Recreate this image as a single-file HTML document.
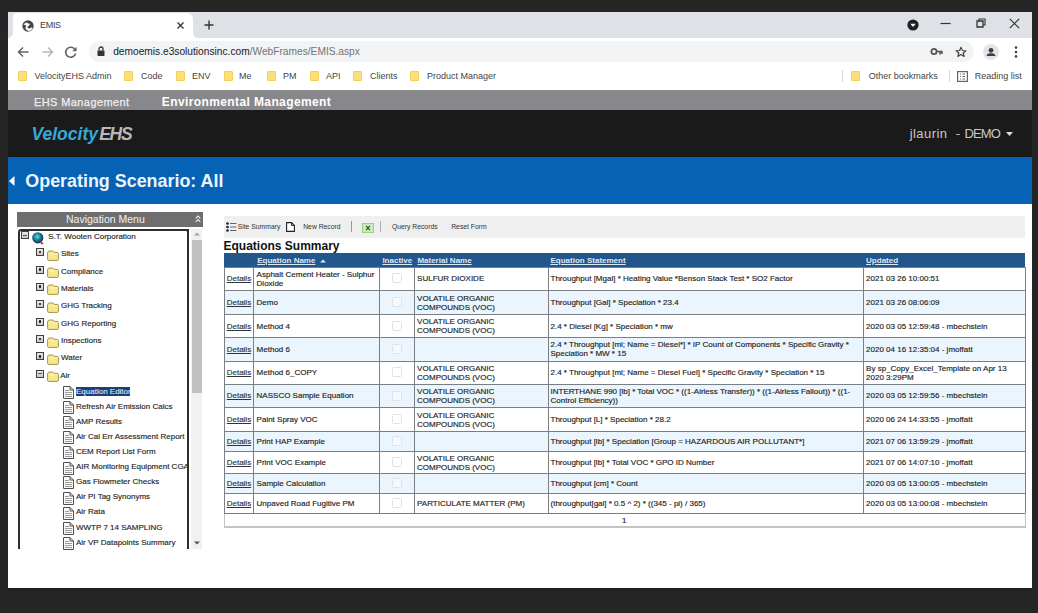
<!DOCTYPE html>
<html><head><meta charset="utf-8">
<style>
*{margin:0;padding:0;box-sizing:border-box}
html,body{width:1038px;height:613px;overflow:hidden;background:#262626;font-family:"Liberation Sans",sans-serif;position:relative}
.a{position:absolute}
.t{position:absolute;white-space:nowrap;line-height:1}
svg{position:absolute;overflow:visible}
#win{left:8px;top:12px;width:1024px;height:576px;background:#fff}
#tabs{left:8px;top:12px;width:1024px;height:26px;background:#dee1e6}
#tab{left:13px;top:12.5px;width:180px;height:25.5px;background:#fff;border-radius:4px 6px 0 0}
#omni{left:89px;top:41px;width:885px;height:21px;background:#f1f3f4;border-radius:11px}
.bmf{position:absolute;top:71px;width:9px;height:10px;background:#fbe07a;border:1px solid #f2cf55;border-radius:1px}
.bmt{top:72px;font-size:9px;color:#444}
#gbar{left:8px;top:90px;width:1024px;height:20px;background:#88878b}
#hdr{left:8px;top:110px;width:1024px;height:47px;background:#1b1a1a}
#blue{left:8px;top:157px;width:1024px;height:47px;background:#0662b5}

.nt{position:absolute;white-space:nowrap;line-height:1;font-size:8px;color:#262626;-webkit-text-stroke:0.15px currentColor}
.cell{position:absolute;white-space:nowrap;line-height:9px;font-size:8px;color:#1c1c1c;-webkit-text-stroke:0.15px currentColor}
.hd{position:absolute;white-space:nowrap;line-height:1;font-size:8px;font-weight:bold;color:#dce9f7;text-decoration:underline}
</style></head><body><div class="a" id="shadowline" style="left:8px;top:588px;width:1024px;height:2px;background:#1e1e1e"></div>

<div id="win" class="a"></div>
<!-- ===== browser chrome ===== -->
<div id="tabs" class="a"></div>
<div id="tab" class="a"></div>
<svg style="left:193px;top:32px" width="6" height="6"><path d="M0 0 Q0 6 6 6 L0 6Z" fill="#fff"/></svg>
<svg style="left:7px;top:32px" width="6" height="6"><path d="M6 0 Q6 6 0 6 L6 6Z" fill="#fff"/></svg>
<svg style="left:21.8px;top:19.6px" width="12" height="12" viewBox="0 0 16 16"><circle cx="8" cy="8" r="7.6" fill="#474747"/><path d="M5.5 3.2 C7 4.6 9 4 10 5.2 C11 6.6 8.6 7.6 7.6 8.6 C6.6 10 8.4 11.6 10.2 11.2 C12 10.8 12.6 9.8 14.2 10.2 C13.2 13 10.8 14.8 8.4 15 C7.6 13.6 5.8 13 4.8 12 C4.2 10.2 5.8 9.2 5.4 7.8 C5 6.6 3.2 6.6 2.2 6.4 C2.8 5 4 3.8 5.5 3.2Z" fill="#fff"/></svg>
<div class="t" style="left:40px;top:21px;font-size:9px;letter-spacing:-0.3px;color:#3c4043">EMIS</div>
<svg style="left:177px;top:21.5px" width="7" height="7"><path d="M0.5 0.5 L6.5 6.5 M6.5 0.5 L0.5 6.5" stroke="#333" stroke-width="1.3"/></svg>
<svg style="left:204px;top:20px" width="10" height="10"><path d="M5 0.5 V9.5 M0.5 5 H9.5" stroke="#333" stroke-width="1.4"/></svg>
<!-- window controls -->
<svg style="left:906.5px;top:19px" width="12" height="12"><circle cx="6" cy="6" r="5.6" fill="#202124"/><path d="M3.3 4.8 L8.7 4.8 L6 8Z" fill="#fff"/></svg>
<svg style="left:940px;top:22px" width="11" height="3"><path d="M0.5 1.5 H10.5" stroke="#333" stroke-width="1.2"/></svg>
<svg style="left:975.5px;top:18px" width="10" height="10"><path d="M1 3 H7 V9 H1Z" fill="none" stroke="#333" stroke-width="1.3"/><path d="M3 3 V1 H9 V7 H7" fill="none" stroke="#333" stroke-width="1.1"/></svg>
<svg style="left:1009px;top:17.5px" width="11" height="11"><path d="M0.8 0.8 L10.2 10.2 M10.2 0.8 L0.8 10.2" stroke="#333" stroke-width="1.2"/></svg>
<!-- toolbar -->
<svg style="left:17px;top:46px" width="12" height="12"><path d="M11.5 6 H1.5 M6 1.5 L1.5 6 L6 10.5" fill="none" stroke="#5f6368" stroke-width="1.5"/></svg>
<svg style="left:42px;top:46px" width="12" height="12"><path d="M0.5 6 H10.5 M6 1.5 L10.5 6 L6 10.5" fill="none" stroke="#b5b8bb" stroke-width="1.5"/></svg>
<svg style="left:65px;top:46px" width="12" height="12"><path d="M10 3.6 A5 5 0 1 0 10.6 7.5" fill="none" stroke="#5f6368" stroke-width="1.6"/><path d="M11.6 0.8 V5.2 H7.2Z" fill="#5f6368"/></svg>
<div id="omni" class="a"></div>
<svg style="left:97px;top:46px" width="8" height="10"><path d="M2 4.5 V3 A2 2 0 0 1 6 3 V4.5" fill="none" stroke="#333" stroke-width="1.3"/><rect x="0.5" y="4.5" width="7" height="5.5" rx="0.8" fill="#333"/></svg>
<div class="t" style="left:113.2px;top:46.5px;font-size:10.2px;color:#202124">demoemis.e3solutionsinc.com<span style="color:#70757a">/WebFrames/EMIS.aspx</span></div>
<svg style="left:931px;top:47px" width="12" height="9"><circle cx="3" cy="4.5" r="2.6" fill="none" stroke="#555" stroke-width="1.8"/><path d="M5.5 4.5 H11.5 M9 4.5 V7.5 M11 4.5 V7" stroke="#555" stroke-width="1.6"/></svg>
<svg style="left:955px;top:45.5px" width="12" height="12" viewBox="0 0 24 24"><path d="M12 2.5 L14.8 9 L21.8 9.5 L16.5 14 L18.2 21 L12 17.2 L5.8 21 L7.5 14 L2.2 9.5 L9.2 9 Z" fill="none" stroke="#444" stroke-width="2.4" stroke-linejoin="round"/></svg>
<svg style="left:983px;top:43.5px" width="16" height="16"><circle cx="8" cy="8" r="8" fill="#e3e5ea"/><circle cx="8" cy="6.3" r="2.4" fill="#3c4043"/><path d="M3.5 12 C3.8 9.8 6 9.3 8 9.3 C10 9.3 12.2 9.8 12.5 12Z" fill="#3c4043"/></svg>
<svg style="left:1013.5px;top:45.5px" width="4" height="12"><circle cx="2" cy="1.6" r="1.3" fill="#444"/><circle cx="2" cy="6" r="1.3" fill="#444"/><circle cx="2" cy="10.4" r="1.3" fill="#444"/></svg>
<!-- bookmarks -->
<div class="bmf" style="left:18px"></div><div class="t bmt" style="left:34.5px">VelocityEHS Admin</div>
<div class="bmf" style="left:124px"></div><div class="t bmt" style="left:141px">Code</div>
<div class="bmf" style="left:176px"></div><div class="t bmt" style="left:192px">ENV</div>
<div class="bmf" style="left:223.5px"></div><div class="t bmt" style="left:239px">Me</div>
<div class="bmf" style="left:266.5px"></div><div class="t bmt" style="left:283px">PM</div>
<div class="bmf" style="left:309.5px"></div><div class="t bmt" style="left:326px">API</div>
<div class="bmf" style="left:353px"></div><div class="t bmt" style="left:370px">Clients</div>
<div class="bmf" style="left:410px"></div><div class="t bmt" style="left:427px">Product Manager</div>
<div class="a" style="left:842px;top:70px;width:1px;height:12px;background:#d8d8d8"></div>
<div class="bmf" style="left:851px"></div><div class="t bmt" style="left:868.7px">Other bookmarks</div>
<div class="a" style="left:949px;top:70px;width:1px;height:12px;background:#d8d8d8"></div>
<svg style="left:957px;top:71px" width="11" height="11"><rect x="0.6" y="0.6" width="9.8" height="9.8" fill="none" stroke="#666" stroke-width="1.2"/><path d="M3 3 H4 M3 5.5 H4 M3 8 H4 M5.5 3 H8 M5.5 5.5 H8 M5.5 8 H8" stroke="#666" stroke-width="1"/></svg>
<div class="t bmt" style="left:974.7px">Reading list</div>
<!-- ===== page ===== -->
<div id="gbar" class="a"></div>
<div id="hdr" class="a"></div>
<div id="blue" class="a"></div>
<div class="t" style="left:34px;top:96.5px;font-size:11px;letter-spacing:0.4px;color:#eeeeee;-webkit-text-stroke:0.25px #eeeeee">EHS Management</div>
<div class="t" style="left:161.8px;top:96px;font-size:12px;font-weight:bold;letter-spacing:0.39px;color:#fff">Environmental Management</div>
<div class="t" style="left:31.5px;top:125.8px;font-size:17.5px;font-style:italic;font-weight:bold;letter-spacing:0;color:#35a9d9">Velocity</div>
<div class="t" style="left:99.2px;top:125.8px;font-size:17.5px;font-style:italic;font-weight:bold;letter-spacing:-1.3px;color:#b9b9b9">EHS</div>
<div class="t" style="left:909.7px;top:127px;font-size:13px;letter-spacing:0.45px;color:#c8c8c8">jlaurin</div>
<div class="a" style="left:955.5px;top:134px;width:4.5px;height:1.3px;background:#aaa"></div>
<div class="t" style="left:964.5px;top:127px;font-size:13px;color:#c8c8c8;letter-spacing:-0.9px">DEMO</div>
<svg style="left:1006px;top:132px" width="7" height="4"><path d="M0 0 H7 L3.5 4Z" fill="#ddd"/></svg>
<svg style="left:9px;top:176px" width="6" height="10"><path d="M5.5 0 V10 L0 5Z" fill="#fff"/></svg>
<div class="t" style="left:25.3px;top:173px;font-size:17.9px;font-weight:bold;color:#eaf5ff">Operating Scenario: All</div>

<div class="a" style="left:16.5px;top:212px;width:186.5px;height:14.5px;background:#6e6e6e"></div>
<div class="t" style="left:66px;top:213.5px;font-size:10.5px;color:#f2f2f2">Navigation Menu</div>
<svg style="left:194.5px;top:214.5px" width="6" height="8"><path d="M0.7 3.3 L3 1 L5.3 3.3 M0.7 6.8 L3 4.5 L5.3 6.8" fill="none" stroke="#eee" stroke-width="1.1"/></svg>
<div class="a" style="left:17.8px;top:228.5px;width:171.2px;height:330px;border:2px solid #2e2e2e;border-radius:3px;background:#fff"></div>
<div class="a" style="left:10px;top:549.3px;width:190px;height:30px;background:#fff"></div>
<div class="a" style="left:191px;top:228.5px;width:11.3px;height:320.8px;background:#f1f1f1"></div>
<svg style="left:193.5px;top:231.5px" width="6" height="4"><path d="M0 3.5 L3 0.5 L6 3.5Z" fill="#a3a3a3"/></svg>
<div class="a" style="left:192px;top:240px;width:9.8px;height:153px;background:#c1c1c1"></div>
<svg style="left:193.5px;top:540.5px" width="6" height="4"><path d="M0 0.5 L6 0.5 L3 3.5Z" fill="#505050"/></svg>
<div class="a" style="left:21.3px;top:231.4px;width:8px;height:8px;border:1.3px solid #404040;background:linear-gradient(#e8e8e8,#c8c8c8)"></div><div class="a" style="left:23.3px;top:234.9px;width:4px;height:1px;background:#555"></div>
<svg style="left:32px;top:232px" width="13" height="13"><defs><radialGradient id="gl" cx="0.45" cy="0.4" r="0.6"><stop offset="0" stop-color="#5fe3e0"/><stop offset="0.5" stop-color="#1e7c9c"/><stop offset="1" stop-color="#12304f"/></radialGradient></defs><circle cx="5.8" cy="5.8" r="5.6" fill="url(#gl)"/><path d="M8 8.5 L12 12 L9 12.3Z" fill="#c8283a"/></svg>
<div class="nt" style="left:48.3px;top:232.5px;">S.T. Wooten Corporation</div>
<div class="a" style="left:36px;top:248.0px;width:8px;height:8px;border:1.3px solid #404040;background:linear-gradient(#e8e8e8,#c8c8c8)"></div><div class="a" style="left:38.7px;top:250.7px;width:2.6px;height:2.6px;border-radius:1px;background:#111"></div>
<svg style="left:47.2px;top:249.5px" width="12" height="11"><path d="M0.6 3 Q0.6 1 2.5 1 H5.2 Q6.8 1 7.3 2.4 H10.4 Q11.4 2.4 11.4 3.4 V9.4 Q11.4 10.4 10.4 10.4 H1.6 Q0.6 10.4 0.6 9.4Z" fill="#f6e88f" stroke="#a89448" stroke-width="1"/><path d="M1.4 4 H10.6" stroke="#fff6c2" stroke-width="0.8"/></svg>
<div class="nt" style="left:61px;top:249.9px;">Sites</div>
<div class="a" style="left:36px;top:265.6px;width:8px;height:8px;border:1.3px solid #404040;background:linear-gradient(#e8e8e8,#c8c8c8)"></div><div class="a" style="left:38.7px;top:268.3px;width:2.6px;height:2.6px;border-radius:1px;background:#111"></div>
<svg style="left:47.2px;top:267.1px" width="12" height="11"><path d="M0.6 3 Q0.6 1 2.5 1 H5.2 Q6.8 1 7.3 2.4 H10.4 Q11.4 2.4 11.4 3.4 V9.4 Q11.4 10.4 10.4 10.4 H1.6 Q0.6 10.4 0.6 9.4Z" fill="#f6e88f" stroke="#a89448" stroke-width="1"/><path d="M1.4 4 H10.6" stroke="#fff6c2" stroke-width="0.8"/></svg>
<div class="nt" style="left:61px;top:267.5px;">Compliance</div>
<div class="a" style="left:36px;top:282.6px;width:8px;height:8px;border:1.3px solid #404040;background:linear-gradient(#e8e8e8,#c8c8c8)"></div><div class="a" style="left:38.7px;top:285.3px;width:2.6px;height:2.6px;border-radius:1px;background:#111"></div>
<svg style="left:47.2px;top:284.1px" width="12" height="11"><path d="M0.6 3 Q0.6 1 2.5 1 H5.2 Q6.8 1 7.3 2.4 H10.4 Q11.4 2.4 11.4 3.4 V9.4 Q11.4 10.4 10.4 10.4 H1.6 Q0.6 10.4 0.6 9.4Z" fill="#f6e88f" stroke="#a89448" stroke-width="1"/><path d="M1.4 4 H10.6" stroke="#fff6c2" stroke-width="0.8"/></svg>
<div class="nt" style="left:61px;top:284.5px;">Materials</div>
<div class="a" style="left:36px;top:300.0px;width:8px;height:8px;border:1.3px solid #404040;background:linear-gradient(#e8e8e8,#c8c8c8)"></div><div class="a" style="left:38.7px;top:302.7px;width:2.6px;height:2.6px;border-radius:1px;background:#111"></div>
<svg style="left:47.2px;top:301.5px" width="12" height="11"><path d="M0.6 3 Q0.6 1 2.5 1 H5.2 Q6.8 1 7.3 2.4 H10.4 Q11.4 2.4 11.4 3.4 V9.4 Q11.4 10.4 10.4 10.4 H1.6 Q0.6 10.4 0.6 9.4Z" fill="#f6e88f" stroke="#a89448" stroke-width="1"/><path d="M1.4 4 H10.6" stroke="#fff6c2" stroke-width="0.8"/></svg>
<div class="nt" style="left:61px;top:301.9px;">GHG Tracking</div>
<div class="a" style="left:36px;top:317.6px;width:8px;height:8px;border:1.3px solid #404040;background:linear-gradient(#e8e8e8,#c8c8c8)"></div><div class="a" style="left:38.7px;top:320.3px;width:2.6px;height:2.6px;border-radius:1px;background:#111"></div>
<svg style="left:47.2px;top:319.1px" width="12" height="11"><path d="M0.6 3 Q0.6 1 2.5 1 H5.2 Q6.8 1 7.3 2.4 H10.4 Q11.4 2.4 11.4 3.4 V9.4 Q11.4 10.4 10.4 10.4 H1.6 Q0.6 10.4 0.6 9.4Z" fill="#f6e88f" stroke="#a89448" stroke-width="1"/><path d="M1.4 4 H10.6" stroke="#fff6c2" stroke-width="0.8"/></svg>
<div class="nt" style="left:61px;top:319.5px;">GHG Reporting</div>
<div class="a" style="left:36px;top:335.1px;width:8px;height:8px;border:1.3px solid #404040;background:linear-gradient(#e8e8e8,#c8c8c8)"></div><div class="a" style="left:38.7px;top:337.8px;width:2.6px;height:2.6px;border-radius:1px;background:#111"></div>
<svg style="left:47.2px;top:336.6px" width="12" height="11"><path d="M0.6 3 Q0.6 1 2.5 1 H5.2 Q6.8 1 7.3 2.4 H10.4 Q11.4 2.4 11.4 3.4 V9.4 Q11.4 10.4 10.4 10.4 H1.6 Q0.6 10.4 0.6 9.4Z" fill="#f6e88f" stroke="#a89448" stroke-width="1"/><path d="M1.4 4 H10.6" stroke="#fff6c2" stroke-width="0.8"/></svg>
<div class="nt" style="left:61px;top:337.0px;">Inspections</div>
<div class="a" style="left:36px;top:352.3px;width:8px;height:8px;border:1.3px solid #404040;background:linear-gradient(#e8e8e8,#c8c8c8)"></div><div class="a" style="left:38.7px;top:355.0px;width:2.6px;height:2.6px;border-radius:1px;background:#111"></div>
<svg style="left:47.2px;top:353.8px" width="12" height="11"><path d="M0.6 3 Q0.6 1 2.5 1 H5.2 Q6.8 1 7.3 2.4 H10.4 Q11.4 2.4 11.4 3.4 V9.4 Q11.4 10.4 10.4 10.4 H1.6 Q0.6 10.4 0.6 9.4Z" fill="#f6e88f" stroke="#a89448" stroke-width="1"/><path d="M1.4 4 H10.6" stroke="#fff6c2" stroke-width="0.8"/></svg>
<div class="nt" style="left:61px;top:354.2px;">Water</div>
<div class="a" style="left:36px;top:369.6px;width:8px;height:8px;border:1.3px solid #404040;background:linear-gradient(#e8e8e8,#c8c8c8)"></div><div class="a" style="left:38px;top:373.1px;width:4px;height:1px;background:#555"></div>
<svg style="left:47.2px;top:371.1px" width="12" height="11"><path d="M0.6 3 Q0.6 1 2.5 1 H5.2 Q6.8 1 7.3 2.4 H10.4 Q11.4 2.4 11.4 3.4 V9.4 Q11.4 10.4 10.4 10.4 H1.6 Q0.6 10.4 0.6 9.4Z" fill="#f6e88f" stroke="#a89448" stroke-width="1"/><path d="M1.4 4 H10.6" stroke="#fff6c2" stroke-width="0.8"/></svg>
<div class="nt" style="left:60.2px;top:371.5px;">Air</div>
<svg style="left:63px;top:386px" width="11" height="13"><path d="M0.5 0.5 H7 L10.5 4 V12.5 H0.5Z" fill="#fafafa" stroke="#505050" stroke-width="1"/><path d="M7 0.5 V4 H10.5" fill="none" stroke="#505050" stroke-width="1"/><path d="M2 4.5 H6 M2 6.5 H9 M2 8.5 H9 M2 10.5 H9" stroke="#9a9a9a" stroke-width="1"/></svg>
<div class="a" style="left:75.6px;top:386.6px;width:54.5px;height:9.3px;background:#1d3f77"></div>
<div class="nt" style="left:76px;top:387.5px;color:#cfe0f5">Equation Editor</div>
<svg style="left:63px;top:401px" width="11" height="13"><path d="M0.5 0.5 H7 L10.5 4 V12.5 H0.5Z" fill="#fafafa" stroke="#505050" stroke-width="1"/><path d="M7 0.5 V4 H10.5" fill="none" stroke="#505050" stroke-width="1"/><path d="M2 4.5 H6 M2 6.5 H9 M2 8.5 H9 M2 10.5 H9" stroke="#9a9a9a" stroke-width="1"/></svg>
<div class="nt" style="left:76px;top:402.5px;">Refresh Air Emission Calcs</div>
<svg style="left:63px;top:416px" width="11" height="13"><path d="M0.5 0.5 H7 L10.5 4 V12.5 H0.5Z" fill="#fafafa" stroke="#505050" stroke-width="1"/><path d="M7 0.5 V4 H10.5" fill="none" stroke="#505050" stroke-width="1"/><path d="M2 4.5 H6 M2 6.5 H9 M2 8.5 H9 M2 10.5 H9" stroke="#9a9a9a" stroke-width="1"/></svg>
<div class="nt" style="left:76px;top:417.5px;">AMP Results</div>
<svg style="left:63px;top:431px" width="11" height="13"><path d="M0.5 0.5 H7 L10.5 4 V12.5 H0.5Z" fill="#fafafa" stroke="#505050" stroke-width="1"/><path d="M7 0.5 V4 H10.5" fill="none" stroke="#505050" stroke-width="1"/><path d="M2 4.5 H6 M2 6.5 H9 M2 8.5 H9 M2 10.5 H9" stroke="#9a9a9a" stroke-width="1"/></svg>
<div class="nt" style="left:76px;top:432.5px;">Air Cal Err Assessment Report</div>
<svg style="left:63px;top:446px" width="11" height="13"><path d="M0.5 0.5 H7 L10.5 4 V12.5 H0.5Z" fill="#fafafa" stroke="#505050" stroke-width="1"/><path d="M7 0.5 V4 H10.5" fill="none" stroke="#505050" stroke-width="1"/><path d="M2 4.5 H6 M2 6.5 H9 M2 8.5 H9 M2 10.5 H9" stroke="#9a9a9a" stroke-width="1"/></svg>
<div class="nt" style="left:76px;top:447.9px;">CEM Report List Form</div>
<svg style="left:63px;top:462px" width="11" height="13"><path d="M0.5 0.5 H7 L10.5 4 V12.5 H0.5Z" fill="#fafafa" stroke="#505050" stroke-width="1"/><path d="M7 0.5 V4 H10.5" fill="none" stroke="#505050" stroke-width="1"/><path d="M2 4.5 H6 M2 6.5 H9 M2 8.5 H9 M2 10.5 H9" stroke="#9a9a9a" stroke-width="1"/></svg>
<div class="nt" style="left:76px;top:463.1px;">AIR Monitoring Equipment CGA</div>
<svg style="left:63px;top:476px" width="11" height="13"><path d="M0.5 0.5 H7 L10.5 4 V12.5 H0.5Z" fill="#fafafa" stroke="#505050" stroke-width="1"/><path d="M7 0.5 V4 H10.5" fill="none" stroke="#505050" stroke-width="1"/><path d="M2 4.5 H6 M2 6.5 H9 M2 8.5 H9 M2 10.5 H9" stroke="#9a9a9a" stroke-width="1"/></svg>
<div class="nt" style="left:76px;top:478.0px;">Gas Flowmeter Checks</div>
<svg style="left:63px;top:492px" width="11" height="13"><path d="M0.5 0.5 H7 L10.5 4 V12.5 H0.5Z" fill="#fafafa" stroke="#505050" stroke-width="1"/><path d="M7 0.5 V4 H10.5" fill="none" stroke="#505050" stroke-width="1"/><path d="M2 4.5 H6 M2 6.5 H9 M2 8.5 H9 M2 10.5 H9" stroke="#9a9a9a" stroke-width="1"/></svg>
<div class="nt" style="left:76px;top:493.1px;">Air PI Tag Synonyms</div>
<svg style="left:63px;top:507px" width="11" height="13"><path d="M0.5 0.5 H7 L10.5 4 V12.5 H0.5Z" fill="#fafafa" stroke="#505050" stroke-width="1"/><path d="M7 0.5 V4 H10.5" fill="none" stroke="#505050" stroke-width="1"/><path d="M2 4.5 H6 M2 6.5 H9 M2 8.5 H9 M2 10.5 H9" stroke="#9a9a9a" stroke-width="1"/></svg>
<div class="nt" style="left:76px;top:508.2px;">Air Rata</div>
<svg style="left:63px;top:522px" width="11" height="13"><path d="M0.5 0.5 H7 L10.5 4 V12.5 H0.5Z" fill="#fafafa" stroke="#505050" stroke-width="1"/><path d="M7 0.5 V4 H10.5" fill="none" stroke="#505050" stroke-width="1"/><path d="M2 4.5 H6 M2 6.5 H9 M2 8.5 H9 M2 10.5 H9" stroke="#9a9a9a" stroke-width="1"/></svg>
<div class="nt" style="left:76px;top:523.7px;">WWTP 7 14 SAMPLING</div>
<svg style="left:63px;top:537px" width="11" height="13"><path d="M0.5 0.5 H7 L10.5 4 V12.5 H0.5Z" fill="#fafafa" stroke="#505050" stroke-width="1"/><path d="M7 0.5 V4 H10.5" fill="none" stroke="#505050" stroke-width="1"/><path d="M2 4.5 H6 M2 6.5 H9 M2 8.5 H9 M2 10.5 H9" stroke="#9a9a9a" stroke-width="1"/></svg>
<div class="nt" style="left:76px;top:538.8px;">Air VP Datapoints Summary</div>
<div class="a" style="left:189px;top:228.5px;width:2px;height:321px;background:#fff"></div>
<div class="a" style="left:187px;top:229px;width:2px;height:320.3px;background:#2e2e2e"></div>
<div class="a" style="left:223.7px;top:216px;width:801.5px;height:22px;background:#efefef"></div>
<svg style="left:226px;top:221.5px" width="11" height="10"><circle cx="1.5" cy="1.5" r="1.3" fill="#1a1a3a"/><circle cx="1.5" cy="5" r="1.3" fill="#1a1a3a"/><circle cx="1.5" cy="8.5" r="1.3" fill="#1a1a3a"/><path d="M4 1.5 H10.5 M4 5 H10.5 M4 8.5 H10.5" stroke="#666" stroke-width="1"/></svg>
<div class="t" style="left:237.7px;top:224px;font-size:6.8px;color:#333">Site Summary</div>
<svg style="left:286px;top:221.5px" width="9" height="10"><path d="M0.6 0.6 H5.5 L8.4 3.5 V9.4 H0.6Z" fill="#fff" stroke="#222" stroke-width="1.1"/><path d="M5.5 0.6 V3.5 H8.4" fill="none" stroke="#222" stroke-width="0.9"/></svg>
<div class="t" style="left:303.2px;top:224px;font-size:6.8px;color:#333">New Record</div>
<div class="a" style="left:351px;top:221px;width:1px;height:11px;background:#9a9a9a"></div>
<svg style="left:362px;top:222.5px" width="12" height="10"><rect x="0.5" y="0.5" width="11" height="9" fill="#cfe8c2" stroke="#9ccf86" stroke-width="1"/><path d="M4.2 2.8 L7.8 7.2 M7.8 2.8 L4.2 7.2" stroke="#2c5e22" stroke-width="1.3"/></svg>
<div class="a" style="left:380px;top:221px;width:1px;height:11px;background:#b0b0b0"></div>
<div class="t" style="left:391.9px;top:224px;font-size:6.8px;color:#333">Query Records</div>
<div class="t" style="left:451.2px;top:224px;font-size:6.8px;color:#333">Reset Form</div>
<div class="t" style="left:223.5px;top:240px;font-size:12px;font-weight:bold;color:#111">Equations Summary</div>
<div class="a" style="left:224.2px;top:253px;width:801.3px;height:14px;background:#23568c"></div>
<div class="hd" style="left:257.2px;top:257px">Equation Name</div>
<div class="hd" style="left:382.4px;top:257px">Inactive</div>
<div class="hd" style="left:417.4px;top:257px">Material Name</div>
<div class="hd" style="left:550.5px;top:257px">Equation Statement</div>
<div class="hd" style="left:866.1px;top:257px">Updated</div>
<svg style="left:320px;top:258.7px" width="6" height="4"><path d="M0 3.5 L3 0.5 L6 3.5Z" fill="#dce9f7"/></svg>
<div class="a" style="left:224.2px;top:267px;width:801.3px;height:23.3px;background:#fff"></div>
<div class="cell" style="left:226.7px;top:274.2px"><span style="text-decoration:underline;color:#333">Details</span></div>
<div class="cell" style="left:256.6px;top:269.8px">Asphalt Cement Heater - Sulphur<br>Dioxide</div>
<div class="a" style="left:392px;top:273.3px;width:10px;height:10px;border:1px solid #e2e2e2;border-radius:1.5px;background:rgba(255,255,255,0.4)"></div>
<div class="cell" style="left:417.1px;top:274.2px">SULFUR DIOXIDE</div>
<div class="cell" style="left:550.5px;top:274.2px">Throughput [Mgal] * Heating Value *Benson Stack Test * SO2 Factor</div>
<div class="cell" style="left:866.1px;top:274.2px">2021 03 26 10:00:51</div>
<div class="a" style="left:224.2px;top:290.3px;width:801.3px;height:24.1px;background:#ebf5fd"></div>
<div class="cell" style="left:226.7px;top:298.0px"><span style="text-decoration:underline;color:#333">Details</span></div>
<div class="cell" style="left:256.6px;top:298.0px">Demo</div>
<div class="a" style="left:392px;top:297.1px;width:10px;height:10px;border:1px solid #e2e2e2;border-radius:1.5px;background:rgba(255,255,255,0.4)"></div>
<div class="cell" style="left:417.1px;top:293.5px">VOLATILE ORGANIC<br>COMPOUNDS (VOC)</div>
<div class="cell" style="left:550.5px;top:298.0px">Throughput [Gal] * Speciation * 23.4</div>
<div class="cell" style="left:866.1px;top:298.0px">2021 03 26 08:06:09</div>
<div class="a" style="left:224.2px;top:314.4px;width:801.3px;height:22.9px;background:#fff"></div>
<div class="cell" style="left:226.7px;top:321.5px"><span style="text-decoration:underline;color:#333">Details</span></div>
<div class="cell" style="left:256.6px;top:321.5px">Method 4</div>
<div class="a" style="left:392px;top:320.6px;width:10px;height:10px;border:1px solid #e2e2e2;border-radius:1.5px;background:rgba(255,255,255,0.4)"></div>
<div class="cell" style="left:417.1px;top:317.0px">VOLATILE ORGANIC<br>COMPOUNDS (VOC)</div>
<div class="cell" style="left:550.5px;top:321.5px">2.4 * Diesel [Kg] * Speciation * mw</div>
<div class="cell" style="left:866.1px;top:321.5px">2020 03 05 12:59:48 - mbechstein</div>
<div class="a" style="left:224.2px;top:337.3px;width:801.3px;height:23.8px;background:#ebf5fd"></div>
<div class="cell" style="left:226.7px;top:344.8px"><span style="text-decoration:underline;color:#333">Details</span></div>
<div class="cell" style="left:256.6px;top:344.8px">Method 6</div>
<div class="a" style="left:392px;top:343.9px;width:10px;height:10px;border:1px solid #e2e2e2;border-radius:1.5px;background:rgba(255,255,255,0.4)"></div>
<div class="cell" style="left:550.5px;top:340.3px">2.4 * Throughput [ml; Name = Diesel*] * IP Count of Components * Specific Gravity *<br>Speciation * MW * 15</div>
<div class="cell" style="left:866.1px;top:344.8px">2020 04 16 12:35:04 - jmoffatt</div>
<div class="a" style="left:224.2px;top:361.1px;width:801.3px;height:22.9px;background:#fff"></div>
<div class="cell" style="left:226.7px;top:368.2px"><span style="text-decoration:underline;color:#333">Details</span></div>
<div class="cell" style="left:256.6px;top:368.2px">Method 6_COPY</div>
<div class="a" style="left:392px;top:367.2px;width:10px;height:10px;border:1px solid #e2e2e2;border-radius:1.5px;background:rgba(255,255,255,0.4)"></div>
<div class="cell" style="left:417.1px;top:363.7px">VOLATILE ORGANIC<br>COMPOUNDS (VOC)</div>
<div class="cell" style="left:550.5px;top:368.2px">2.4 * Throughput [ml; Name = Diesel Fuel] * Specific Gravity * Speciation * 15</div>
<div class="cell" style="left:866.1px;top:363.7px">By sp_Copy_Excel_Template on Apr 13<br>2020 3:29PM</div>
<div class="a" style="left:224.2px;top:384px;width:801.3px;height:23.6px;background:#ebf5fd"></div>
<div class="cell" style="left:226.7px;top:391.4px"><span style="text-decoration:underline;color:#333">Details</span></div>
<div class="cell" style="left:256.6px;top:391.4px">NASSCO Sample Equation</div>
<div class="a" style="left:392px;top:390.5px;width:10px;height:10px;border:1px solid #e2e2e2;border-radius:1.5px;background:rgba(255,255,255,0.4)"></div>
<div class="cell" style="left:417.1px;top:386.9px">VOLATILE ORGANIC<br>COMPOUNDS (VOC)</div>
<div class="cell" style="left:550.5px;top:386.9px">INTERTHANE 990 [lb] * Total VOC * ((1-Airless Transfer)) * ((1-Airless Fallout)) * ((1-<br>Control Efficiency))</div>
<div class="cell" style="left:866.1px;top:391.4px">2020 03 05 12:59:56 - mbechstein</div>
<div class="a" style="left:224.2px;top:407.6px;width:801.3px;height:23.5px;background:#fff"></div>
<div class="cell" style="left:226.7px;top:415.0px"><span style="text-decoration:underline;color:#333">Details</span></div>
<div class="cell" style="left:256.6px;top:415.0px">Paint Spray VOC</div>
<div class="a" style="left:392px;top:414.1px;width:10px;height:10px;border:1px solid #e2e2e2;border-radius:1.5px;background:rgba(255,255,255,0.4)"></div>
<div class="cell" style="left:417.1px;top:410.5px">VOLATILE ORGANIC<br>COMPOUNDS (VOC)</div>
<div class="cell" style="left:550.5px;top:415.0px">Throughput [L] * Speciation * 28.2</div>
<div class="cell" style="left:866.1px;top:415.0px">2020 06 24 14:33:55 - jmoffatt</div>
<div class="a" style="left:224.2px;top:431.1px;width:801.3px;height:20.0px;background:#ebf5fd"></div>
<div class="cell" style="left:226.7px;top:436.7px"><span style="text-decoration:underline;color:#333">Details</span></div>
<div class="cell" style="left:256.6px;top:436.7px">Print HAP Example</div>
<div class="a" style="left:392px;top:435.8px;width:10px;height:10px;border:1px solid #e2e2e2;border-radius:1.5px;background:rgba(255,255,255,0.4)"></div>
<div class="cell" style="left:550.5px;top:436.7px">Throughput [lb] * Speciation [Group = HAZARDOUS AIR POLLUTANT*]</div>
<div class="cell" style="left:866.1px;top:436.7px">2021 07 06 13:59:29 - jmoffatt</div>
<div class="a" style="left:224.2px;top:451.1px;width:801.3px;height:22.5px;background:#fff"></div>
<div class="cell" style="left:226.7px;top:458.0px"><span style="text-decoration:underline;color:#333">Details</span></div>
<div class="cell" style="left:256.6px;top:458.0px">Print VOC Example</div>
<div class="a" style="left:392px;top:457.1px;width:10px;height:10px;border:1px solid #e2e2e2;border-radius:1.5px;background:rgba(255,255,255,0.4)"></div>
<div class="cell" style="left:417.1px;top:453.5px">VOLATILE ORGANIC<br>COMPOUNDS (VOC)</div>
<div class="cell" style="left:550.5px;top:458.0px">Throughput [lb] * Total VOC * GPO ID Number</div>
<div class="cell" style="left:866.1px;top:458.0px">2021 07 06 14:07:10 - jmoffatt</div>
<div class="a" style="left:224.2px;top:473.6px;width:801.3px;height:19.8px;background:#ebf5fd"></div>
<div class="cell" style="left:226.7px;top:479.1px"><span style="text-decoration:underline;color:#333">Details</span></div>
<div class="cell" style="left:256.6px;top:479.1px">Sample Calculation</div>
<div class="a" style="left:392px;top:478.2px;width:10px;height:10px;border:1px solid #e2e2e2;border-radius:1.5px;background:rgba(255,255,255,0.4)"></div>
<div class="cell" style="left:550.5px;top:479.1px">Throughput [cm] * Count</div>
<div class="cell" style="left:866.1px;top:479.1px">2020 03 05 13:00:05 - mbechstein</div>
<div class="a" style="left:224.2px;top:493.4px;width:801.3px;height:19.9px;background:#fff"></div>
<div class="cell" style="left:226.7px;top:498.9px"><span style="text-decoration:underline;color:#333">Details</span></div>
<div class="cell" style="left:256.6px;top:498.9px">Unpaved Road Fugitive PM</div>
<div class="a" style="left:392px;top:498.0px;width:10px;height:10px;border:1px solid #e2e2e2;border-radius:1.5px;background:rgba(255,255,255,0.4)"></div>
<div class="cell" style="left:417.1px;top:498.9px">PARTICULATE MATTER (PM)</div>
<div class="cell" style="left:550.5px;top:498.9px">(throughput[gal] * 0.5 ^ 2) * ((345 - pi) / 365)</div>
<div class="cell" style="left:866.1px;top:498.9px">2020 03 05 13:00:08 - mbechstein</div>
<div class="a" style="left:223.7px;top:513.3px;width:802.3px;height:15px;border:1px solid #c4c4c4;border-top:0;border-bottom:2px solid #c4c4c4;background:#fff"></div>
<div class="a" style="left:224.2px;top:266.5px;width:801.3px;height:1px;background:#7b7f84"></div>
<div class="a" style="left:224.2px;top:289.8px;width:801.3px;height:1px;background:#7b7f84"></div>
<div class="a" style="left:224.2px;top:313.9px;width:801.3px;height:1px;background:#7b7f84"></div>
<div class="a" style="left:224.2px;top:336.8px;width:801.3px;height:1px;background:#7b7f84"></div>
<div class="a" style="left:224.2px;top:360.6px;width:801.3px;height:1px;background:#7b7f84"></div>
<div class="a" style="left:224.2px;top:383.5px;width:801.3px;height:1px;background:#7b7f84"></div>
<div class="a" style="left:224.2px;top:407.1px;width:801.3px;height:1px;background:#7b7f84"></div>
<div class="a" style="left:224.2px;top:430.6px;width:801.3px;height:1px;background:#7b7f84"></div>
<div class="a" style="left:224.2px;top:450.6px;width:801.3px;height:1px;background:#7b7f84"></div>
<div class="a" style="left:224.2px;top:473.1px;width:801.3px;height:1px;background:#7b7f84"></div>
<div class="a" style="left:224.2px;top:492.9px;width:801.3px;height:1px;background:#7b7f84"></div>
<div class="a" style="left:224.2px;top:512.8px;width:801.3px;height:1px;background:#7b7f84"></div>
<div class="a" style="left:223.7px;top:267px;width:1px;height:246.3px;background:#7b7f84"></div>
<div class="a" style="left:253.0px;top:267px;width:1px;height:246.3px;background:#7b7f84"></div>
<div class="a" style="left:379.0px;top:267px;width:1px;height:246.3px;background:#7b7f84"></div>
<div class="a" style="left:413.7px;top:267px;width:1px;height:246.3px;background:#7b7f84"></div>
<div class="a" style="left:548.0px;top:267px;width:1px;height:246.3px;background:#7b7f84"></div>
<div class="a" style="left:863.0px;top:267px;width:1px;height:246.3px;background:#7b7f84"></div>
<div class="a" style="left:1025.0px;top:267px;width:1px;height:246.3px;background:#7b7f84"></div>
<div class="cell" style="left:622px;top:515.5px">1</div>
</body></html>
